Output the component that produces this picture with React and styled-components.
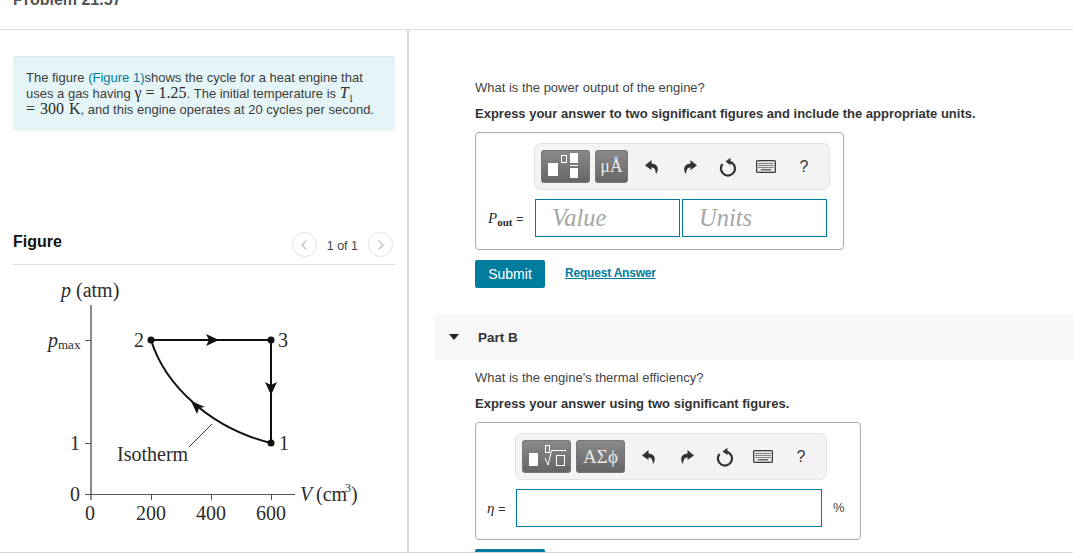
import React from 'react';
import styled, { createGlobalStyle } from 'styled-components';
import { ChevronLeft, ChevronRight } from 'lucide-react';

const GlobalStyle = createGlobalStyle`
  html, body {
    margin: 0;
    padding: 0;
    background: #fff;
    overflow: hidden;
  }
  body {
    font-family: "Liberation Sans", Arial, sans-serif;
    font-size: 13px;
    color: #3d3d3d;
  }
`;

const Page = styled.div`
  width: 1073px;
  height: 553px;
  display: flex;
  flex-direction: column;
  overflow: hidden;
`;

const Header = styled.header`
  height: 29px;
  flex: none;
  padding-left: 13px;
  border-bottom: 1px solid #dcdfe3;
  overflow: hidden;
`;

const Title = styled.h1`
  margin: -11px 0 0;
  font-size: 16px;
  line-height: 22px;
  font-weight: bold;
  color: #555;
`;

const Main = styled.main`
  flex: 1;
  min-height: 0;
  display: grid;
  grid-template-columns: 409px 1fr;
  border-bottom: 1px solid #d5d8dc;
  overflow: hidden;
`;

const LeftPane = styled.section`
  box-sizing: border-box;
  padding: 26px 12px 0 13px;
  border-right: 2px solid #c9d8ea;
`;

const Intro = styled.div`
  height: 75px;
  box-sizing: border-box;
  padding: 13px 13px 0;
  background: #e5f5f7;
  border-top: 1px solid #d9e4e8;
  line-height: 16px;
  color: #3d3d3d;
`;

const FigureLink = styled.a`
  color: #007c9e;
`;

const Serif = styled.span`
  font-family: "Liberation Serif", "Times New Roman", serif;
  font-size: ${(p) => p.$size || 16}px;
  font-style: ${(p) => (p.$italic ? 'italic' : 'normal')};
  font-weight: ${(p) => (p.$bold ? 'bold' : 'normal')};
  word-spacing: ${(p) => p.$spread || 0}px;
  line-height: 0;
  color: #2b2b2b;
`;

const Sub = styled.sub`
  font-size: 10px;
  line-height: 0;
`;

const FigureBar = styled.div`
  margin-top: 100px;
  height: 33px;
  display: flex;
  align-items: flex-start;
  justify-content: space-between;
  border-bottom: 1px solid #dcdfe3;
`;

const FigureTitle = styled.h2`
  margin: 1px 0 0;
  font-size: 16px;
  line-height: 20px;
  font-weight: bold;
  color: #111;
`;

const Pager = styled.div`
  display: flex;
  align-items: center;
  gap: 10px;
  margin-right: 2px;
  margin-top: 1px;
  font-size: 12.5px;
  color: #444;
`;

const PagerCount = styled.span`
  margin-top: 2px;
`;

const PagerButton = styled.button`
  width: 25px;
  height: 25px;
  padding: 0;
  display: flex;
  align-items: center;
  justify-content: center;
  border: 1px solid #e2e2e2;
  border-radius: 50%;
  background: #fff;
  color: #c9c9c9;
`;

const Chart = styled.svg`
  display: block;
  width: 382px;
  height: 270px;
`;

const ChartText = styled.text`
  font-family: "Liberation Serif", "Times New Roman", serif;
  font-size: ${(p) => p.$size || 20}px;
  font-style: ${(p) => (p.$italic ? 'italic' : 'normal')};
  fill: #2c2c2c;
`;

const RightPane = styled.section`
  padding: 50px 0 0 26px;
`;

const Block = styled.div`
  padding-left: 40px;
`;

const Question = styled.p`
  margin: 0 0 10px;
  line-height: 16px;
  color: #444;
`;

const Instruction = styled.p`
  margin: 0 0 10px;
  line-height: 16px;
  font-weight: bold;
  color: #333;
`;

const AnswerBox = styled.div`
  width: ${(p) => p.$width}px;
  height: 118px;
  box-sizing: border-box;
  padding: 10px 0 0 ${(p) => p.$inset}px;
  border: 1px solid #adadad;
  border-radius: 4px;
`;

const Toolbar = styled.div`
  display: inline-flex;
  align-items: flex-start;
  height: 47px;
  box-sizing: border-box;
  padding: 6px;
  gap: 5px;
  background: #f3f3f3;
  border: 1px solid #e3e3e3;
  border-radius: 7px;
`;

const ToolButton = styled.div`
  width: ${(p) => p.$width}px;
  height: 33px;
  box-sizing: border-box;
  display: flex;
  align-items: center;
  justify-content: center;
  position: relative;
  border-radius: 4px;
  background: linear-gradient(#8b8b8b, #646464);
  box-shadow: inset 0 0 0 1px #777;
  color: #e8e8e8;
  font-family: "Liberation Serif", "Times New Roman", serif;
  font-size: ${(p) => p.$font || 18}px;
`;

const IconGroup = styled.div`
  display: flex;
`;

const IconSlot = styled.div`
  width: 38px;
  height: 33px;
  display: flex;
  align-items: center;
  justify-content: center;
  color: #333;
  font-size: 16px;
`;

const AnswerRow = styled.div`
  display: flex;
  align-items: center;
  margin: 9px 0 0 ${(p) => p.$shift}px;
  height: 38px;
`;

const RowLabel = styled.label`
  width: ${(p) => p.$width}px;
  flex: none;
  font-size: 13px;
  color: #333;
`;

const Field = styled.input`
  width: ${(p) => p.$width}px;
  height: 38px;
  box-sizing: border-box;
  margin-right: 2px;
  padding: 0 0 0 16px;
  border: 1px solid #007c9e;
  border-radius: 0;
  background: #fff;
  font-family: "Liberation Serif", "Times New Roman", serif;
  font-style: italic;
  font-size: 24.5px;
  outline: none;

  &::placeholder {
    color: #a6a6a6;
    opacity: 1;
  }
`;

const Unit = styled.span`
  margin: -2px 0 0 9px;
  color: #444;
`;

const Actions = styled.div`
  display: flex;
  align-items: center;
  gap: 20px;
  margin-top: ${(p) => p.$top}px;
`;

const SubmitButton = styled.button`
  width: 70px;
  height: 28px;
  padding: 0;
  border: 0;
  border-radius: 2px;
  background: #007c9e;
  color: #fff;
  font-family: inherit;
  font-size: 14px;
`;

const RequestLink = styled.a`
  color: #007c9e;
  font-size: 12px;
  font-weight: bold;
  text-decoration: underline;
  margin-top: -3px;
  letter-spacing: -0.2px;
`;

const PartBand = styled.div`
  height: 46px;
  margin: 26px 0 10px;
  display: flex;
  align-items: center;
  background: #f7f7f7;
  padding-left: 14px;
  gap: 19px;
`;

const Caret = styled.span`
  width: 0;
  height: 0;
  border-left: 5px solid transparent;
  border-right: 5px solid transparent;
  border-top: 6px solid #222;
`;

const PartTitle = styled.h3`
  margin: 0;
  font-size: 13.5px;
  font-weight: bold;
  color: #333;
`;

const UndoIcon = ({ flip }) => (
  <svg width="16" height="16" viewBox="0 0 16 16" style={flip ? { transform: 'scaleX(-1)' } : undefined}>
    <path fill="#333" d="M7.5 1 L1 6.5 L7.5 11 V8.5 C10.5 8.5 11.5 10.5 12 15 C14.5 12 15.5 5 7.5 4.5 Z" />
  </svg>
);

const ResetIcon = () => (
  <svg width="18" height="20" viewBox="0 0 18 20">
    <path fill="none" stroke="#333" strokeWidth="2.2" d="M10 4.6 A7 7 0 1 1 3.6 7" />
    <path fill="#333" d="M11.5 0.8 V8.2 L6.5 4.5 Z" />
  </svg>
);

const KeyboardIcon = () => (
  <svg width="20" height="13" viewBox="0 0 20 13">
    <rect x="0.6" y="0.6" width="18.8" height="11.8" rx="1" fill="#e4e4e4" stroke="#3a3a3a" strokeWidth="1.2" />
    <path stroke="#444" strokeDasharray="1.2 0.8" d="M2.5 3.5 H17.5 M2.5 5.5 H17.5 M2.5 7.5 H17.5" />
    <path stroke="#333" d="M5 9.8 H15" />
  </svg>
);

const IconTools = () => (
  <IconGroup>
    <IconSlot><UndoIcon /></IconSlot>
    <IconSlot><UndoIcon flip /></IconSlot>
    <IconSlot><ResetIcon /></IconSlot>
    <IconSlot><KeyboardIcon /></IconSlot>
    <IconSlot>?</IconSlot>
  </IconGroup>
);

const TemplateIcon = () => (
  <svg width="49" height="33" viewBox="0 0 49 33">
    <rect x="7" y="13" width="10" height="13" fill="#fff" />
    <rect x="20.5" y="5.5" width="5" height="7" fill="none" stroke="#fff" />
    <rect x="29" y="3" width="8" height="10" fill="#fff" />
    <rect x="29" y="15" width="8" height="1" fill="#fff" />
    <rect x="29" y="18" width="8" height="10" fill="#fff" />
  </svg>
);

const RootIcon = () => (
  <svg width="49" height="33" viewBox="0 0 49 33">
    <rect x="7" y="13" width="9" height="13" fill="#fff" />
    <rect x="23.5" y="5.5" width="4" height="7" fill="none" stroke="#fff" />
    <path fill="none" stroke="#fff" d="M23 18 L26 25 L29.5 10.5 H44" />
    <rect x="34.5" y="15.5" width="8" height="10" fill="none" stroke="#fff" />
  </svg>
);

const CycleChart = () => (
  <Chart viewBox="13 265 382 270">
    <path stroke="#8a8a8a" strokeWidth="2" d="M91 305 V500" />
    <path stroke="#555" fill="none" d="M85 340.5 H91 M85 443.5 H91 M85 494.5 H295 M151.5 494 V500 M211.5 494 V500 M271.5 494 V500" />
    <path stroke="#111" strokeWidth="2" fill="none" d="M151 340 H271 V443" />
    <path stroke="#111" strokeWidth="2" fill="none" d="M151 340 C165 385 210 428 271 443" />
    <path stroke="#333" fill="none" d="M189 447 L212 424" />
    <circle cx="151" cy="340" r="3.5" fill="#111" />
    <circle cx="271" cy="340" r="3.5" fill="#111" />
    <circle cx="271" cy="443" r="3.5" fill="#111" />
    <path fill="#111" d="M219 340 L206 334 L209 340 L206 346 Z" />
    <path fill="#111" d="M271 395 L265 382 L271 385 L277 382 Z" />
    <path fill="#111" d="M191 401 L205 407 L199 408 L197 414 Z" />
    <ChartText x="61" y="297" $italic>p</ChartText>
    <ChartText x="76" y="297">(atm)</ChartText>
    <ChartText x="48" y="347" $italic>p</ChartText>
    <ChartText x="58" y="349" $size={13}>max</ChartText>
    <ChartText x="134" y="347">2</ChartText>
    <ChartText x="278" y="347">3</ChartText>
    <ChartText x="70" y="450">1</ChartText>
    <ChartText x="279" y="450">1</ChartText>
    <ChartText x="117" y="461">Isotherm</ChartText>
    <ChartText x="70" y="501">0</ChartText>
    <ChartText x="85" y="520">0</ChartText>
    <ChartText x="136" y="520">200</ChartText>
    <ChartText x="196" y="520">400</ChartText>
    <ChartText x="256" y="520">600</ChartText>
    <ChartText x="300" y="501" $italic>V</ChartText>
    <ChartText x="316" y="501">(cm</ChartText>
    <ChartText x="345" y="492" $size={12}>3</ChartText>
    <ChartText x="351" y="501">)</ChartText>
  </Chart>
);

export default function App() {
  return (
    <Page>
      <GlobalStyle />
      <Header>
        <Title>Problem 21.57</Title>
      </Header>
      <Main>
        <LeftPane>
          <Intro>
            The figure <FigureLink>(Figure 1)</FigureLink>shows the cycle for a heat engine that
            <br />
            uses a gas having <Serif>γ = 1.25</Serif>. The initial temperature is{' '}
            <Serif $italic>T</Serif><Sub><Serif $size={10}>1</Serif></Sub>
            <br />
            <Serif $spread={1}>= 300 K</Serif>, and this engine operates at 20 cycles per second.
          </Intro>
          <FigureBar>
            <FigureTitle>Figure</FigureTitle>
            <Pager>
              <PagerButton><ChevronLeft size={16} strokeWidth={2.5} /></PagerButton>
              <PagerCount>1 of 1</PagerCount>
              <PagerButton><ChevronRight size={16} strokeWidth={2.5} /></PagerButton>
            </Pager>
          </FigureBar>
          <CycleChart />
        </LeftPane>

        <RightPane>
          <Block>
            <Question>What is the power output of the engine?</Question>
            <Instruction>Express your answer to two significant figures and include the appropriate units.</Instruction>
            <AnswerBox $width={369} $inset={58}>
              <Toolbar>
                <ToolButton $width={49}><TemplateIcon /></ToolButton>
                <ToolButton $width={33}>μÅ</ToolButton>
                <IconTools />
              </Toolbar>
              <AnswerRow $shift={-46}>
                <RowLabel $width={47}>
                  <Serif $italic $size={15}>P</Serif><Sub><Serif $bold $size={11}>out</Serif></Sub> =
                </RowLabel>
                <Field $width={145} placeholder="Value" />
                <Field $width={145} placeholder="Units" />
              </AnswerRow>
            </AnswerBox>
            <Actions $top={10}>
              <SubmitButton>Submit</SubmitButton>
              <RequestLink>Request Answer</RequestLink>
            </Actions>
          </Block>

          <PartBand>
            <Caret />
            <PartTitle>Part B</PartTitle>
          </PartBand>

          <Block>
            <Question>What is the engine's thermal efficiency?</Question>
            <Instruction>Express your answer using two significant figures.</Instruction>
            <AnswerBox $width={386} $inset={39}>
              <Toolbar>
                <ToolButton $width={49}><RootIcon /></ToolButton>
                <ToolButton $width={49} $font={19}>ΑΣϕ</ToolButton>
                <IconTools />
              </Toolbar>
              <AnswerRow $shift={-28}>
                <RowLabel $width={29}>
                  <Serif $italic $size={15}>η</Serif> =
                </RowLabel>
                <Field $width={306} />
                <Unit>%</Unit>
              </AnswerRow>
            </AnswerBox>
            <Actions $top={9}>
              <SubmitButton>Submit</SubmitButton>
            </Actions>
          </Block>
        </RightPane>
      </Main>
    </Page>
  );
}
